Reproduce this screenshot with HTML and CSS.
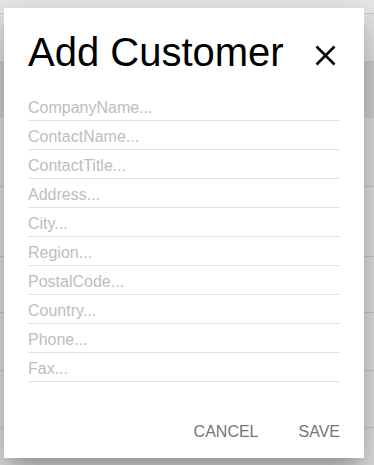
FILE: index.html
```html
<!DOCTYPE html>
<html>
<head>
<meta charset="utf-8">
<link rel="stylesheet" href="styles.css">
</head>
<body>
<div class="page">
  <div class="bg-row r1"></div>
  <div class="bg-row r2"></div>
  <div class="bg-row r3 band"></div>
  <div class="bg-row r4"></div>
  <div class="bg-row r5"></div>
  <div class="bg-row r6"></div>
  <div class="bg-row r7"></div>
  <div class="bg-row r8"></div>
</div>
<div class="dialog">
  <div class="dialog-head">
    <h1 class="title">Add Customer</h1>
    <button class="close" aria-label="close">
      <svg width="21" height="21" viewBox="0 0 21 21"><path d="M1.5 1.5L19.5 19.5M19.5 1.5L1.5 19.5" stroke="#000" stroke-width="2.6" fill="none"/></svg>
    </button>
  </div>
  <form class="form">
    <input class="field" placeholder="CompanyName...">
    <input class="field" placeholder="ContactName...">
    <input class="field" placeholder="ContactTitle...">
    <input class="field" placeholder="Address...">
    <input class="field" placeholder="City...">
    <input class="field" placeholder="Region...">
    <input class="field" placeholder="PostalCode...">
    <input class="field" placeholder="Country...">
    <input class="field" placeholder="Phone...">
    <input class="field" placeholder="Fax...">
  </form>
  <div class="actions">
    <button class="btn">CANCEL</button>
    <button class="btn">SAVE</button>
  </div>
</div>
</body>
</html>
```

FILE: styles.css
```css
html, body {
  margin: 0;
  padding: 0;
}
body {
  width: 374px;
  height: 465px;
  overflow: hidden;
  background: #e3e3e3;
  font-family: "Liberation Sans", Arial, sans-serif;
  position: relative;
}
.page {
  display: flex;
  flex-direction: column;
}
.bg-row {
  border-bottom: 1px solid #cbcbcb;
  box-sizing: border-box;
}
.r1 { height: 14px; background: #ebebeb; }
.r2 { height: 48px; background: #e6e6e6; }
.r3 { height: 125px; }
.band { background: linear-gradient(#d2d2d2 0, #d2d2d2 56px, #e0e0e0 56px); }
.r4 { height: 70px; }
.r5 { height: 56px; }
.r6 { height: 58px; }
.r7 { height: 57px; }
.r8 { height: 60px; }

.dialog {
  position: absolute;
  left: 4px;
  top: 8px;
  width: 360px;
  height: 450px;
  box-sizing: border-box;
  background: #fff;
  padding: 20px 24px 0 24px;
  display: flex;
  flex-direction: column;
  box-shadow: 0 11px 15px -7px rgba(0,0,0,0.2), 0 24px 38px 3px rgba(0,0,0,0.14), 0 9px 46px 8px rgba(0,0,0,0.12);
}
.dialog-head {
  display: flex;
  justify-content: space-between;
  align-items: flex-start;
  height: 48px;
}
.title {
  margin: 0;
  font-size: 40px;
  line-height: 48px;
  font-weight: normal;
  color: #000;
}
.close {
  border: 0;
  background: none;
  padding: 0;
  margin: 17px 4px 0 0;
  width: 21px;
  height: 21px;
  display: block;
}
.close svg { display: block; }
.form {
  margin: 16px 0 0 0;
  display: flex;
  flex-direction: column;
}
.field {
  display: block;
  height: 29px;
  box-sizing: border-box;
  width: 100%;
  border: 0;
  border-bottom: 1px solid #e0e0e0;
  padding: 4px 0 0 0;
  margin: 0;
  font-family: "Liberation Sans", Arial, sans-serif;
  font-size: 16px;
  color: #333;
  outline: none;
  background: transparent;
}
.field::placeholder {
  color: #bdbdbd;
  opacity: 1;
}
.actions {
  margin-top: 40px;
  display: flex;
  justify-content: flex-end;
  gap: 40px;
}
.btn {
  border: 0;
  background: none;
  padding: 0;
  font-family: "Liberation Sans", Arial, sans-serif;
  font-size: 16px;
  line-height: 20px;
  color: #757575;
}
```
